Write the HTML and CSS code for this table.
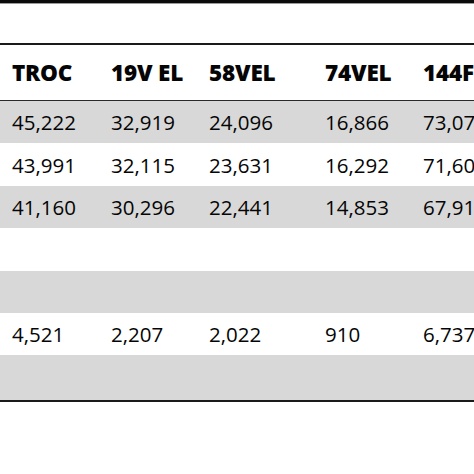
FILE: index.html
```html
<!DOCTYPE html>
<html>
<head>
<meta charset="utf-8">
<link rel="stylesheet" href="styles.css">
</head>
<body>
<div class="page">
  <div class="topbar"></div>
  <div class="spacer"></div>
  <div class="table">
    <div class="row head">
      <div class="c c1">TROC</div><div class="c c2">19V EL</div><div class="c c3">58VEL</div><div class="c c4">74VEL</div><div class="c c5">144FEL</div>
    </div>
    <div class="row gray">
      <div class="c c1">45,222</div><div class="c c2">32,919</div><div class="c c3">24,096</div><div class="c c4">16,866</div><div class="c c5">73,073</div>
    </div>
    <div class="row">
      <div class="c c1">43,991</div><div class="c c2">32,115</div><div class="c c3">23,631</div><div class="c c4">16,292</div><div class="c c5">71,603</div>
    </div>
    <div class="row gray">
      <div class="c c1">41,160</div><div class="c c2">30,296</div><div class="c c3">22,441</div><div class="c c4">14,853</div><div class="c c5">67,914</div>
    </div>
    <div class="row"></div>
    <div class="row gray"></div>
    <div class="row">
      <div class="c c1">4,521</div><div class="c c2">2,207</div><div class="c c3">2,022</div><div class="c c4">910</div><div class="c c5">6,737</div>
    </div>
    <div class="row gray last"></div>
  </div>
</div>
</body>
</html>
```
FILE: styles.css
```css
html, body {
  margin: 0;
  padding: 0;
  background: #ffffff;
}
.page {
  width: 474px;
  height: 474px;
  overflow: hidden;
  font-family: "Open Sans", "Noto Sans", sans-serif;
  color: #050505;
}
.topbar {
  height: 3px;
  background: #0a0a0a;
  border-bottom: 1px solid #9a9a9a;
}
.spacer {
  height: 39px;
}
.table {
  width: 600px;
  border-top: 2px solid #1a1a1a;
  border-bottom: 2px solid #1a1a1a;
}
.row {
  display: flex;
  height: 42.4px;
  align-items: center;
  font-size: 20.5px;
  white-space: nowrap;
}
.row.head {
  height: 55px;
  border-bottom: 1px solid #2a2a2a;
  font-weight: 800;
  font-size: 22.5px;
  letter-spacing: -0.2px;
}
.row.gray {
  background: #d8d8d8;
}
.row.last {
  height: 45px;
}
.c {
  padding-left: 12px;
  box-sizing: border-box;
}
.c1 { width: 99px; }
.c2 { width: 98px; }
.c3 { width: 116px; }
.c4 { width: 98px; }
.c5 { width: 150px; }
```
